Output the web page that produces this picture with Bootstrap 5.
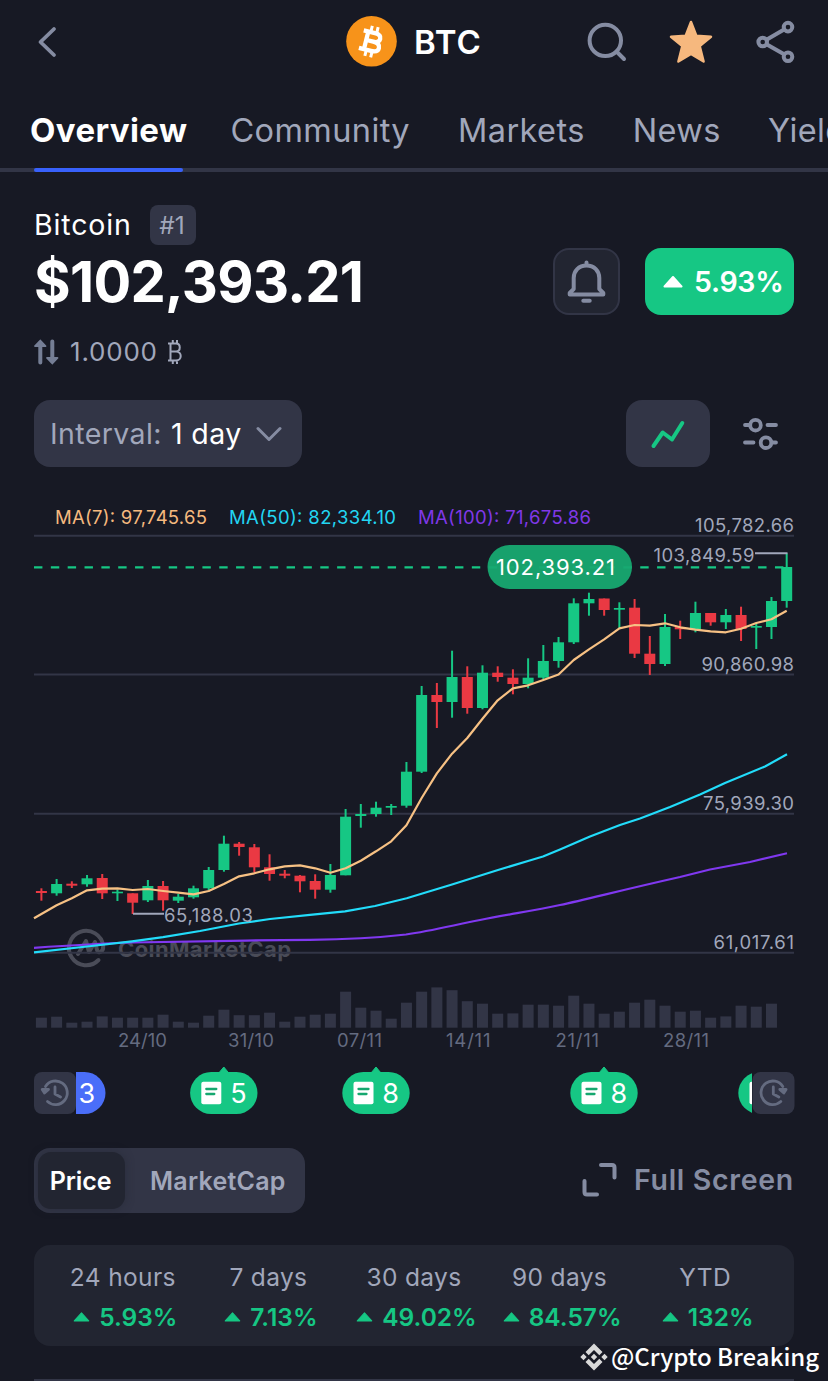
<!DOCTYPE html>
<html lang="en" data-bs-theme="dark">
<head>
<meta charset="utf-8">
<meta name="viewport" content="width=device-width, initial-scale=1">
<title>BTC</title>
<link href="https://cdn.jsdelivr.net/npm/bootstrap@5.3.0/dist/css/bootstrap.min.css" rel="stylesheet">
<style>
  body { background: #171924; color: #fff; font-family: Inter, "Liberation Sans", sans-serif; line-height: 1; width: 828px; height: 1381px; overflow: hidden; }
  svg { display: block; flex: none; }
  .soft { color: #a1a7bb; }
  .up { color: #16c784; }
  .side { padding-left: 34px; padding-right: 34px; }
  .topbar { height: 83px; padding-right: 33px; }
  .coin-title { font-size: 33px; font-weight: 600; letter-spacing: .9px; width: 188px; padding: 1px 0 0 17px; }
  .tabs { height: 89px; border-bottom: 4px solid #323546; padding: 10px 0 0 30px; gap: 43px; flex-wrap: nowrap; overflow: visible; }
  .tabs .nav-link { padding: 1px 0 0; height: 75px; display: flex; align-items: center; font-size: 32.5px; color: #a1a7bb; letter-spacing: .4px; white-space: nowrap; position: relative; }
  .tabs .nav-link.active { color: #fff; padding-top: 0; font-size: 33px; font-weight: 700; letter-spacing: .4px; }
  .tabs .nav-link.active::after { content: ""; position: absolute; left: 4px; right: 4px; bottom: -4px; height: 4px; border-radius: 2px; background: #3861fb; }
  .coin-name { font-size: 28.5px; letter-spacing: .85px; height: 40px; margin-top: 33px; }
  .rank { width: 46px; height: 40px; border-radius: 8px; background: #323546; font-size: 24.5px; letter-spacing: 0; padding: 1px 2px 0 0; }
  .price-row { height: 67px; margin-top: 3px; }
  .price { font-size: 56px; font-weight: 700; letter-spacing: -.7px; }
  .tile { height: 67px; border-radius: 16px; }
  .bell { width: 67px; background: #222531; border: 2px solid #323546; }
  .change { width: 149px; background: #16c784; font-size: 28.5px; font-weight: 600; letter-spacing: -.3px; }
  .convert { height: 33px; margin-top: 20px; font-size: 26px; letter-spacing: .8px; }
  .controls { margin-top: 32px; }
  .interval { width: 268px; background: #323546; font-size: 28.5px; padding-left: 16px; letter-spacing: .4px; }
  .nudge { padding-top: 2px; }
  .plot { margin-top: 33px; overflow: visible; }
  .plot text { font-size: 18.5px; }
  .segmented { height: 65px; width: 271px; background: #323546; border-radius: 16px; padding: 4px; font-size: 25px; font-weight: 600; }
  .segmented .picked { width: 87px; height: 57px; border-radius: 13px; background: #222531; color: #fff; box-shadow: 0 0 8px #22253180; letter-spacing: -.1px; padding-right: 2px; }
  .full { font-size: 28.5px; font-weight: 600; color: #858ca2; letter-spacing: .7px; }
  .periods { height: 101px; margin-top: 32px; border-radius: 16px; background: #222531; padding: 0 16px; }
  .periods > div { flex: 1 0 0; }
  .period-name { font-size: 24.5px; letter-spacing: .35px; height: 25px; margin-top: 20px; white-space: nowrap; }
  .period-val { font-size: 24.5px; font-weight: 600; letter-spacing: 0; height: 26px; margin-top: 14px; padding-left: 5px; }
  .rule { height: 2px; background: #323546; margin-top: 33px; }
  .credit { position: absolute; left: 580px; top: 1339px; height: 36px; font: 500 24px/34px "Noto Sans CJK SC", sans-serif; white-space: nowrap; }
  .credit span { margin-top: -3px; }
</style>
</head>
<body class="position-relative">
<header class="topbar d-flex align-items-center">
  <svg width="28" height="40" viewBox="34 21.500 28 40" style="margin-left:34px" fill="none" stroke="#858ca2" stroke-width="3.800" stroke-linecap="round" stroke-linejoin="round"><path d="M54 28.500 40.500 41.500 54 54.500"/></svg>
  <svg width="51" height="51" viewBox="0 0 51 51" style="margin-left:284px"><circle cx="25.500" cy="25.300" r="25.300" fill="#f7931a"/><g transform="translate(25.300 25.500) rotate(14)" fill="none" stroke="#fff"><path d="M-5.300-9.500V9.500M-10-9H1.500C6.500-9 8-7 8-4.700S6.500-.3 2-.3H-5M2-.3C7.500-.3 9 2.200 9 4.700S7.500 9.200 2 9.200H-10.500" stroke-width="4.300"/><path d="M-2.800-15.500V-9M3.200-15.500V-9M-2.800 9V15.500M3.200 9V15.500" stroke-width="3"/></g></svg>
  <div class="coin-title">BTC</div>
  <svg width="42" height="42" viewBox="585 20.500 42 42" fill="none" stroke="#858ca2" stroke-width="4"><circle cx="605.300" cy="39.900" r="15.700"/><path d="m617 51.500 7 7" stroke-linecap="round"/></svg>
  <svg width="44" height="44" viewBox="669 19.500 44 44" style="margin-left:42px"><path d="M691 21.500 696.300 35.200 711 36.200 699.700 45.500 703.600 61 691 53.500 678.400 61 682.300 45.500 671 36.200 685.700 35.200Z" fill="#f6b87e" stroke="#f6b87e" stroke-width="2.500" stroke-linejoin="round"/></svg>
  <svg class="ms-auto" width="40" height="44" viewBox="755 19.500 40 44" fill="none" stroke="#858ca2" stroke-width="4"><circle cx="788" cy="26.600" r="4.300"/><circle cx="762.700" cy="41.500" r="4.300"/><circle cx="788" cy="56.200" r="4.300"/><path d="m766.500 39.300 18-10.500M766.500 43.700l18 10.300"/></svg>
</header>
<nav class="nav tabs">
  <a class="nav-link active" href="#">Overview</a>
  <a class="nav-link" href="#">Community</a>
  <a class="nav-link" href="#" style="margin-left:5px">Markets</a>
  <a class="nav-link" href="#" style="margin-left:5px">News</a>
  <a class="nav-link" href="#" style="margin-left:4px">Yield</a>
</nav>

<main class="side">
  <div class="coin-name d-flex align-items-center">Bitcoin<span class="rank soft d-flex align-items-center justify-content-center ms-auto" style="margin-right:598px">#1</span></div>
  <div class="price-row d-flex align-items-center">
    <div class="price me-auto">$102,393.21</div>
    <div class="tile bell d-flex align-items-center justify-content-center">
      <svg width="40" height="44" viewBox="567 260 40 44" fill="none" stroke="#858ca2" stroke-width="4" stroke-linecap="round" stroke-linejoin="round"><path d="M586.500 262.500v3M569.700 294.500v-1.500l4-4v-11c0-7 5-12.500 12.800-12.500s12.800 5.500 12.800 12.500v11l4 4v1.500Z"/><path d="M583.300 300.700h6.400"/></svg>
    </div>
    <div class="tile change d-flex align-items-center" style="margin-left:25px;padding-left:18px">
      <svg width="20" height="12" viewBox="0 0 20 12"><path d="M10 1 18.500 10.500H1.500Z" fill="#fff" stroke="#fff" stroke-width="2" stroke-linejoin="round"/></svg><span class="nudge" style="margin-left:11px">5.93%</span>
    </div>
  </div>
  <div class="convert soft d-flex align-items-center">
    <svg width="25" height="26" viewBox="0 0 25 26" fill="#757e95" stroke="#757e95" stroke-linecap="round" stroke-linejoin="round"><path d="M6.300 4v19.500M18.300 2.500V22" stroke-width="4"/><path d="M6.300 1.500 11.500 7H1ZM18.300 24.500 23.500 19H13Z" stroke-width="1.800"/></svg>
    <span style="margin-left:11px">1.0000</span>
    <svg width="16" height="26" viewBox="0 0 16 26" style="margin-left:10px" fill="none" stroke="#a1a7bb" stroke-width="2"><path d="M2.500 4.500V21.500M0 4.500H8C13 4.500 13 12.500 8 12.500H2.500M8 12.500C14.300 12.500 14.300 21.500 8 21.500H0M4.800 1V4.500M9 1V4.500M4.800 21.500V25M9 21.500V25"/></svg>
  </div>
  <div class="controls d-flex align-items-center">
    <div class="tile interval d-flex align-items-center me-auto"><span class="soft nudge">Interval:</span><span class="nudge" style="margin-left:9px">1 day</span>
      <svg width="26" height="16" viewBox="0 0 26 16" style="margin-left:14px" fill="none" stroke="#858ca2" stroke-width="3" stroke-linecap="round" stroke-linejoin="round"><path d="M2 2.500 13 13.500 24 2.500"/></svg></div>
    <div class="tile d-flex align-items-center justify-content-center" style="width:84px;background:#323546"><svg width="36" height="30" viewBox="650 418 36 30" fill="none" stroke="#16c784" stroke-width="4" stroke-linecap="round" stroke-linejoin="round"><path d="M653.500 445 662.700 431.500 672 438.500 682.300 422"/></svg></div>
    <svg width="36" height="34" viewBox="743 416.500 36 34" style="margin:0 15px 0 33px" fill="none" stroke="#858ca2" stroke-width="3.800" stroke-linecap="round"><circle cx="755.500" cy="424.700" r="5.300"/><circle cx="766" cy="442.200" r="5.300"/><path d="M745 424.500h4M767.500 424.500h8.500M745 442h8.500M772 442h4"/></svg>
  </div>

  <svg class="plot" id="plot" width="760" height="648" viewBox="34 500 760 648">
    <g>
      <text x="55" y="523.800" fill="#f5b97f" textLength="152">MA(7): 97,745.65</text>
      <text x="229" y="523.800" fill="#22d5f2" textLength="167">MA(50): 82,334.10</text>
      <text x="418" y="523.800" fill="#8038e8" textLength="173">MA(100): 71,675.86</text>
    </g>
    <g>
      <path d="M98.500 960A17.200 17.200 0 1 1 103.200 946c.3 6-5 8-6 4.500L95 942l-6 10-3-11-8 13" fill="none" stroke="#4a4c58" stroke-width="4" stroke-linecap="round" stroke-linejoin="round"/>
      <text x="118" y="956.500" textLength="173" fill="#4a4c58" style="font-size:22px;font-weight:700">CoinMarketCap</text>
    </g>
    <path d="M34 535.700H794M34 674.600H794M34 813.700H794M34 952.700H794" stroke="#323546" stroke-width="2"/>
    <path d="M34 567.300H787" stroke="#16c784" stroke-width="2.200" stroke-dasharray="8.420 8.420"/>
    <g id="volume" fill="#323546"></g>
    <g id="candles"></g>
    <g fill="none" stroke-width="2.200" stroke-linejoin="round">
      <path stroke="#8038f0" d="M34 947.800C60 946 100 943.500 132 942.500S250 940.500 310 939.800C350 939.500 380 937.500 406 934.500C430 931 450 926 480 920S532 911 560 905S620 890.500 680 877L710 869.500 750 862 787 853.300"/>
      <path stroke="#22dcfa" d="M34 952.300 87 946.500 132 941.300 163 937.200 200 931 239 923.500 270 919 310 914.800 345 911.300 375 906 406.700 898.300 452 884.500 498 870 528 861 543 856.500 560 849.500 590 836.500 620 825 640 818.500 670 807 700 794.500 725 783 765 766.500 787 754.300"/>
      <path id="ma7" stroke="#f7c184"/>
    </g>
    <path d="M133 913.700H164M755 553.300H787.500" stroke="#a1a7bb" stroke-width="2"/>
    <g fill="#a1a7bb">
      <text x="164" y="921.500" textLength="89">65,188.03</text>
      <text x="695" y="532" textLength="99">105,782.66</text>
      <text x="653.500" y="561.500" textLength="101">103,849.59</text>
      <text x="701.500" y="671" textLength="92.500">90,860.98</text>
      <text x="703" y="810" textLength="91">75,939.30</text>
      <text x="713.500" y="949" textLength="80.500">61,017.61</text>
    </g>
    <rect x="487.500" y="545" width="144.500" height="44" rx="22" fill="#17a971" fill-opacity=".95"/>
    <text x="496" y="574.500" textLength="119" fill="#fff" style="font-size:22px">102,393.21</text>
    <g fill="#646b80">
      <text x="118" y="1047" textLength="49">24/10</text><text x="228" y="1047" textLength="46">31/10</text><text x="337" y="1047" textLength="45">07/11</text><text x="446" y="1047" textLength="44.500">14/11</text><text x="555.500" y="1047" textLength="43.500">21/11</text><text x="663" y="1047" textLength="46">28/11</text>
    </g>
    <defs>
      <g id="pin"><path d="M0-26 5-20H-5Z" fill="#16c784" stroke="#16c784" stroke-linejoin="round"/><rect x="-33.700" y="-21" width="67.400" height="42" rx="21" fill="#16c784"/><rect x="-22.500" y="-11.300" width="20" height="22.500" rx="2" fill="#fff"/><path d="M-17.500-4H-7.500M-17.500 1H-9.500" stroke="#16a76f" stroke-width="2.300" stroke-linecap="round"/></g>
      <g id="turn"><path d="M-9.500-6.500A11.800 11.800 0 1 1-7.500 8.500"/><path d="M-12.800-3.500-6.500-3.500-10.500 0Z" fill="#646b80"/></g>
      <clipPath id="edge"><rect x="700" y="1060" width="52" height="70"/></clipPath>
    </defs>
    <use href="#pin" x="223.800" y="1093"/><use href="#pin" x="376" y="1093"/><use href="#pin" x="604" y="1093"/><g clip-path="url(#edge)"><use href="#pin" x="772" y="1093"/></g>
    <path d="M76 1072h8.500a21 21 0 0 1 0 42H76Z" fill="#4a6ef9"/>
    <rect x="34" y="1072" width="42" height="42" rx="8" fill="#323546"/><rect x="752.500" y="1072" width="42" height="42" rx="8" fill="#323546"/>
    <g fill="none" stroke="#646b80" stroke-width="2.800" stroke-linecap="round" stroke-linejoin="round"><use href="#turn" x="55" y="1093"/><use href="#turn" transform="translate(773.300 1093) scale(-1 1)"/><path d="M55 1087v7l5.500 3M773.300 1087v7l5.500 3"/></g>
    <g fill="#fff" text-anchor="middle">
      <text x="86.800" y="1103" style="font-size:27px">3</text><text x="238.500" y="1103" style="font-size:27px">5</text><text x="390.500" y="1103" style="font-size:27px">8</text><text x="618.800" y="1103" style="font-size:27px">8</text>
    </g>
  </svg>

  <div class="d-flex align-items-center justify-content-between">
    <div class="segmented soft d-flex align-items-center"><span class="picked nudge d-flex align-items-center justify-content-center">Price</span><span class="nudge" style="margin-left:25px;letter-spacing:.25px">MarketCap</span></div>
    <div class="full d-flex align-items-center"><svg width="36" height="36" viewBox="0 0 36 36" style="margin-right:16px" fill="none" stroke="#858ca2" stroke-width="4" stroke-linecap="round" stroke-linejoin="round"><path d="M19 2H30Q32.500 2 32.500 4.500V14.500M2.500 18V29Q2.500 31.500 5 31.500H15"/></svg><span>Full Screen</span></div>
  </div>
  <div class="periods d-flex text-center" id="periods"></div>
  <div class="rule"></div>
</main>

<div class="credit d-flex align-items-center">
  <svg width="28" height="28" viewBox="0 0 28 28" fill="#d9d9d9" style="margin-right:3px"><path d="M14 .5 22.500 9 19.300 12.200 14 6.900 8.700 12.200 5.500 9ZM14 27.500 5.500 19 8.700 15.800 14 21.100 19.300 15.800 22.500 19ZM14 10.800 17.200 14 14 17.200 10.800 14ZM3.500 10.800 6.700 14 3.500 17.200.3 14ZM24.500 10.800 27.700 14 24.500 17.200 21.300 14Z"/></svg><span>@Crypto Breaking</span>
</div>

<script src="https://cdn.jsdelivr.net/npm/bootstrap@5.3.0/dist/js/bootstrap.bundle.min.js"></script>
<script>
  // each candle: direction (1 up, 0 down), high, body top, body bottom, low
  const candles = [[0,888.3,891,893,900.7],[1,879,884,893.3,895.7],[0,881.3,883.7,885.7,888],[1,875,878.3,884.3,886.7],[0,874,878,893.3,899],[1,889.5,891.7,893.3,901],[0,893.3,893.3,902.7,914],[1,880,886,900.3,902],[0,881,886,900.3,910.7],[1,894,896.7,900.7,903],[1,885.7,888.3,897.3,898.7],[1,867,870,888.3,890],[1,835.7,843.7,870,871.7],[0,842,843.7,847,855.7],[0,844,847.3,867.3,872.7],[0,854.3,867.3,874,880.7],[0,870,873.7,875.7,878.3],[0,875,875.7,881.3,892.3],[0,874.3,881,889.7,898.7],[1,864,875,889.7,892.7],[1,809,816.7,875.3,875.3],[1,804,814,816,827.7],[1,801.7,807.7,814,816.7],[1,804,806,807.7,815],[1,762,771.7,805.7,807.7],[1,686,695,771.7,773],[0,683,695,702,728],[1,650.7,677,702,717.7],[0,666.3,677,708,713.7],[1,665.3,672.7,708,709.3],[0,666.3,672.7,677,681.7],[0,669.3,677.7,684,694.3],[1,658.3,677.7,684,688.3],[1,645,661,677.7,679.3],[1,637,642.3,661,667.7],[1,598.3,603.3,642.3,644],[1,592.7,599,603.3,615.7],[0,598.5,598.5,610,615.7],[1,602.3,608,609.7,628.3],[0,599,607.7,653.7,658],[0,636,653.7,664,675],[1,614,627,664,666],[0,620.7,627,629.3,639],[1,601.7,613,629.3,632.3],[0,613,613,622.3,625.7],[1,609,615,622.3,629],[0,606.7,615,629,641],[1,623.3,626,627.7,649],[1,597,601,627,639],[1,553.3,567,601,607.7]];
  const ma7 = [914,905.3,898.3,890.3,888.7,888.3,890,889,891,892.7,894.3,891,884,876.3,873.3,869.3,866.3,865.3,868.3,872.7,868.3,860.7,851.3,841.3,825.3,798,773.3,753.7,738,718.7,700.3,688.3,685.3,680,674.5,660,649.3,639.3,628.3,625,625.7,623.3,627.3,629.7,631.3,632.3,628.7,623,619.3,610.7];
  const volume = [10,11,5,6,11.3,10,10,10,13,6,5,12,18,12.5,12.5,15,6,11,13,14,36,20,17,9,25,36,40.3,37.5,26.5,24,14,14.3,23,23,22,32,24,14,16,25,28,22,16,17,10,11.3,22,21,24];
  const x = i => 41.4 + 15.21 * i;
  document.getElementById('candles').innerHTML = candles.map(([up, h, t, b, l], i) =>
    `<g fill="${up ? '#16c784' : '#ea3943'}"><rect x="${x(i) - 1}" y="${h}" width="2" height="${l - h}"/><rect x="${x(i) - 5.5}" y="${t}" width="11" height="${b - t}"/></g>`).join('');
  document.getElementById('volume').innerHTML = volume.map((v, i) =>
    `<rect x="${x(i) - 5.5}" y="${1027.7 - v}" width="11" height="${v}"/>`).join('');
  document.getElementById('ma7').setAttribute('d', 'M34 918.3' + ma7.map((y, i) => `L${x(i)} ${y}`).join(''));
  document.getElementById('periods').innerHTML = [['24 hours', '5.93%'], ['7 days', '7.13%'], ['30 days', '49.02%'], ['90 days', '84.57%'], ['YTD', '132%']].map(([n, v]) =>
    `<div><div class="period-name soft">${n}</div><div class="period-val up d-flex align-items-center justify-content-center"><svg width="17" height="10" viewBox="0 0 15 9" style="margin-right:9px"><path d="M7.5.8 14 8H1Z" fill="#16c784" stroke="#16c784" stroke-linejoin="round"/></svg>${v}</div></div>`).join('');
</script>
</body>
</html>
